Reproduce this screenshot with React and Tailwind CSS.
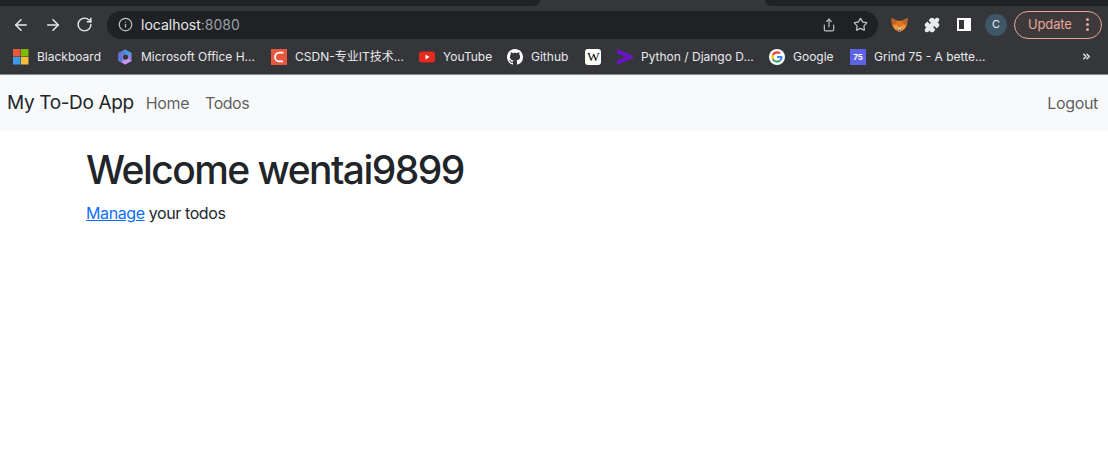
import React from 'react';
import { ArrowLeft, ArrowRight, RotateCw, Info, Share, Star, Puzzle, ChevronsRight } from 'lucide-react';

const bookmarks = [
    { label: 'Blackboard', gap: 'w-[104px]', icon: <MsLogo /> },
    { label: 'Microsoft Office H...', gap: 'w-[154px]', icon: <OfficeLogo /> },
    { label: 'CSDN-专业IT技术...', gap: 'w-[148px]', icon: <CsdnLogo /> },
    { label: 'YouTube', gap: 'w-[88px]', icon: <YoutubeLogo /> },
    { label: 'Github', gap: 'w-[78px]', icon: <GithubLogo /> },
    { label: '', gap: 'w-[32px]', icon: <WikiLogo /> },
    { label: 'Python / Django D...', gap: 'w-[152px]', icon: <PurpleLogo /> },
    { label: 'Google', gap: 'w-[81px]', icon: <GoogleLogo /> },
    { label: 'Grind 75 - A bette...', gap: 'w-[150px]', icon: <GrindLogo /> },
];

function MsLogo() {
    return (
        <svg viewBox="0 0 16 16" className="w-[16px] h-[16px]">
            <rect x="0" y="0" width="7.5" height="7.5" fill="#e9573f" />
            <rect x="8" y="0" width="7.5" height="7.5" fill="#7fba00" />
            <rect x="0" y="8" width="7.5" height="7.5" fill="#3c9be8" />
            <rect x="8" y="8" width="7.5" height="7.5" fill="#f6bd3a" />
        </svg>
    );
}

function OfficeLogo() {
    return (
        <svg viewBox="0 0 16 16" className="w-[16px] h-[16px]">
            <path d="M8 0.500 L14.500 4 V12 L8 15.500 L1.500 12 V4 Z" fill="#9a7fe0" />
            <path d="M8 0.500 L14.500 4 L11 6.500 L8 5 Z" fill="#3f9fe0" />
            <path d="M1.500 4 L8 0.500 V5 L5 6.500 V13.500 L1.500 12 Z" fill="#5a78d8" />
            <path d="M5 12.500 L8 15.500 L14.500 12 L11 9.500 Z" fill="#c79aea" />
            <circle cx="8.500" cy="8" r="2.600" fill="#35363a" />
        </svg>
    );
}

function CsdnLogo() {
    return (
        <svg viewBox="0 0 16 16" className="w-[16px] h-[16px]">
            <rect width="16" height="16" fill="#e9573f" />
            <path d="M12.500 3.600 H8.500 C5.800 3.600 4 5.600 4 8 C4 10.400 5.800 12.400 8.500 12.400 H12" fill="none" stroke="#fff" strokeWidth="1.700" />
        </svg>
    );
}

function YoutubeLogo() {
    return (
        <svg viewBox="0 0 16 16" className="w-[16px] h-[16px]">
            <rect x="0" y="2.500" width="16" height="11" rx="3" fill="#e62b1e" />
            <path d="M6.500 5.600 L10.600 8 L6.500 10.400 Z" fill="#fff" />
        </svg>
    );
}

function GithubLogo() {
    return (
        <svg viewBox="0 0 16 16" className="w-[16px] h-[16px]" fill="#fff">
            <path d="M8 0C3.58 0 0 3.58 0 8c0 3.54 2.29 6.53 5.47 7.59.4.07.55-.17.55-.38 0-.19-.01-.82-.01-1.49-2.01.37-2.53-.49-2.69-.94-.09-.23-.48-.94-.82-1.13-.28-.15-.68-.52-.01-.53.63-.01 1.08.58 1.23.82.72 1.21 1.87.87 2.33.66.07-.52.28-.87.51-1.07-1.78-.2-3.64-.89-3.64-3.95 0-.87.31-1.59.82-2.15-.08-.2-.36-1.02.08-2.12 0 0 .67-.21 2.2.82.64-.18 1.32-.27 2-.27s1.36.09 2 .27c1.53-1.04 2.2-.82 2.2-.82.44 1.1.16 1.92.08 2.12.51.56.82 1.27.82 2.15 0 3.07-1.87 3.75-3.65 3.95.29.25.54.73.54 1.48 0 1.07-.01 1.93-.01 2.2 0 .21.15.46.55.38A8.01 8.01 0 0 0 16 8c0-4.42-3.58-8-8-8z" />
        </svg>
    );
}

function WikiLogo() {
    return (
        <div className="w-[16px] h-[16px] rounded-[3px] bg-white flex items-center justify-center text-black text-[13px] tracking-[-1px] leading-none font-['Liberation_Serif',serif]">
            W
        </div>
    );
}

function PurpleLogo() {
    return (
        <svg viewBox="0 0 16 16" className="w-[16px] h-[16px]">
            <path d="M0 0 L16 6.800 V9.200 L0 16 V11.500 L8.500 8 L0 4.500 Z" fill="#6a14c4" />
        </svg>
    );
}

function GoogleLogo() {
    return (
        <svg viewBox="0 0 48 48" className="w-[16px] h-[16px]">
            <circle cx="24" cy="24" r="24" fill="#fff" />
            <path fill="#ea4335" d="M24 13.500c2.900 0 5 1.200 6.200 2.300l4.600-4.500C32 8.700 28.400 7 24 7c-6.600 0-12.300 3.800-15.100 9.300l5.300 4.100c1.300-4 5.100-6.900 9.800-6.900z" />
            <path fill="#4285f4" d="M40.500 24.400c0-1.400-.1-2.400-.4-3.400H24v6.200h9.500c-.2 1.500-1.200 3.900-3.600 5.400l5.200 4c3.400-3.100 5.400-7.300 5.400-12.200z" />
            <path fill="#fbbc05" d="M14.200 27.600c-.3-1-.5-2.100-.5-3.200s.2-2.200.5-3.200l-5.300-4.100C7.700 19.300 7 21.600 7 24s.7 4.700 1.900 6.900z" />
            <path fill="#34a853" d="M24 41c4.600 0 8.400-1.500 11.100-4.100l-5.200-4c-1.400 1-3.300 1.700-5.900 1.700-4.700 0-8.500-3-9.800-7l-5.300 4.100C11.700 37.200 17.400 41 24 41z" />
        </svg>
    );
}

function GrindLogo() {
    return (
        <div className="w-[16px] h-[16px] bg-[#5d63e6] flex items-center justify-center text-white text-[8px] font-bold leading-none">
            75
        </div>
    );
}

function FoxLogo() {
    return (
        <svg viewBox="0 0 18 16" className="w-[17px] h-[16px]">
            <path d="M0.500 0.500 L6.500 3.500 H11.500 L17.500 0.500 L17 8 L14 13 L9 15.500 L4 13 L1 8 Z" fill="#e2761b" />
            <path d="M0.500 0.500 L6.500 3.500 L5 7 L1 8 Z M17.500 0.500 L11.500 3.500 L13 7 L17 8 Z" fill="#b9642a" />
            <path d="M2 9 L5.500 8 L7.500 10.500 L5.500 13 Z M16 9 L12.500 8 L10.500 10.500 L12.500 13 Z" fill="#f09a4a" />
            <path d="M7 10.500 H11 L10.500 14.500 H7.500 Z" fill="#d7c1b3" />
            <path d="M7.700 13 H10.300 L9 15 Z" fill="#233447" />
        </svg>
    );
}

const App = () => {
    return (
        <div className="w-[1108px] h-[471px] bg-white font-['Inter','Liberation_Sans',sans-serif] overflow-hidden">
            {/* browser chrome */}
            <div className="h-[75px] bg-[#35363a] border-b border-[#8a8b8e] flex flex-col">
                <div className="h-[6px] flex">
                    <div className="w-[540px] bg-[#202124] rounded-br-[6px]"></div>
                    <div className="flex-1"></div>
                    <div className="w-[343px] bg-[#202124] rounded-bl-[6px]"></div>
                </div>
                <div className="h-[33px] pt-[4px] flex items-center">
                    <div className="flex items-center w-[107px] pl-[12px] gap-[14px] text-[#e8eaed]">
                        <ArrowLeft size={18} strokeWidth={2} />
                        <ArrowRight size={18} strokeWidth={2} />
                        <RotateCw size={17} strokeWidth={2} />
                    </div>
                    <div className="w-[771px] h-[28px] rounded-full bg-[#202124] flex items-center pl-[11px] pr-[10px]">
                        <Info size={15} className="text-[#bdc1c6]" />
                        <span className="ml-[8px] text-[14px] text-[#e8eaed]">localhost<span className="text-[#9aa0a6]">:8080</span></span>
                        <Share size={14} className="ml-auto text-[#bdc1c6]" />
                        <Star size={15} className="ml-[17px] text-[#bdc1c6]" />
                    </div>
                    <div className="flex items-center ml-[13px]">
                        <FoxLogo />
                        <Puzzle size={16} fill="#e8eaed" className="ml-[16px] text-[#e8eaed]" />
                        <div className="ml-[17px] w-[14px] h-[13px] border-2 border-white flex justify-end">
                            <div className="w-[5px] bg-white"></div>
                        </div>
                        <div className="ml-[14px] w-[22px] h-[22px] rounded-full bg-[#3f5666] flex items-center justify-center text-[11px] text-[#e8eaed]">C</div>
                        <div className="ml-[7px] w-[88px] h-[28px] rounded-full border border-[#e8a59c] flex items-center pl-[13px] pr-[12px] bg-[#3e3a3b]">
                            <span className="text-[13px] tracking-[-0.15px] text-[#e8a59c]">Update</span>
                            <div className="ml-auto flex flex-col gap-[2px]">
                                <div className="w-[3px] h-[3px] rounded-full bg-[#e8a59c]"></div>
                                <div className="w-[3px] h-[3px] rounded-full bg-[#e8a59c]"></div>
                                <div className="w-[3px] h-[3px] rounded-full bg-[#e8a59c]"></div>
                            </div>
                        </div>
                    </div>
                </div>
                <div className="flex-1 flex items-center pl-[13px]">
                    {bookmarks.map((b, i) => (
                        <div key={i} className={`flex items-center gap-[8px] shrink-0 ${b.gap}`}>
                            {b.icon}
                            {b.label && <span className="text-[12px] text-[#e8eaed] whitespace-nowrap font-['Inter','Noto_Sans_CJK_SC',sans-serif]">{b.label}</span>}
                        </div>
                    ))}
                    <ChevronsRight size={11} strokeWidth={3} className="ml-auto mr-[16px] text-[#e8eaed]" />
                </div>
            </div>

            {/* navbar */}
            <nav className="h-[56px] bg-[#f8f9fa] flex items-center px-[7px]">
                <span className="text-[19px] tracking-[-0.35px] text-[#212529] mr-[12px]">My To-Do App</span>
                <span className="text-[16px] tracking-[-0.4px] text-[#000000a6]">Home</span>
                <span className="ml-[16px] text-[16px] tracking-[-0.5px] text-[#000000a6]">Todos</span>
                <span className="ml-auto mr-[3px] text-[16px] tracking-[-0.35px] text-[#000000a6]">Logout</span>
            </nav>

            {/* page */}
            <div className="pl-[86px]">
                <h1 className="mt-[15px] text-[39px] leading-[48px] tracking-[-1.55px] font-[540] text-[#212529]">Welcome wentai9899</h1>
                <p className="mt-[7px] text-[16px] leading-[24px] tracking-[-0.4px] text-[#212529]">
                    <a href="#" className="text-[#0d6efd] underline">Manage</a> your todos
                </p>
            </div>
        </div>
    );
};

export default App;
